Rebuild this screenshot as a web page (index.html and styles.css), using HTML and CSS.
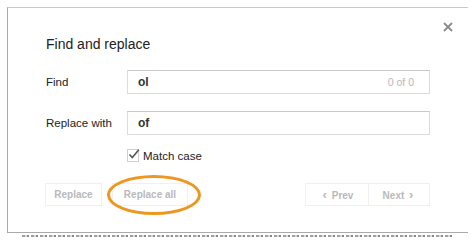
FILE: index.html
```html
<!DOCTYPE html>
<html lang="en">
<head>
  <meta charset="UTF-8">
  <title>Find and replace</title>
  <link rel="stylesheet" href="styles.css">
</head>
<body>
  <div class="dialog">
    <button class="close" aria-label="Close">
      <svg width="10" height="10" viewBox="0 0 10 10"><path d="M1 1L9 9M9 1L1 9" stroke="#8a8a8a" stroke-width="1.8" fill="none"/></svg>
    </button>
    <h1>Find and replace</h1>
    <div class="row">
      <label for="find">Find</label>
      <div class="field">
        <input type="text" id="find" value="ol">
        <span class="count">0 of 0</span>
      </div>
    </div>
    <div class="row">
      <label for="replaceWith">Replace with</label>
      <div class="field">
        <input type="text" id="replaceWith" value="of">
      </div>
    </div>
    <div class="check-row">
      <span class="checkbox">
        <svg width="13" height="13" viewBox="0 0 13 13"><path d="M2.5 6.5L5.3 9.6L11.8 1.8" stroke="#555" stroke-width="1.6" fill="none"/></svg>
      </span>
      <span>Match case</span>
    </div>
    <div class="actions">
      <div class="left-group">
        <button class="btn btn-replace">Replace</button>
        <div class="highlight-wrap">
          <button class="btn btn-all">Replace all</button>
          <span class="ring"></span>
        </div>
      </div>
      <div class="nav-group">
        <button class="btn btn-prev"><span class="chev">&lsaquo;</span> Prev</button>
        <button class="btn btn-next">Next <span class="chev">&rsaquo;</span></button>
      </div>
    </div>
  </div>
  <div class="doc-line"></div>
</body>
</html>
```
FILE: styles.css
```css
body {
  margin: 0;
  background-color: #fff;
  font-family: "Liberation Sans", Arial, sans-serif;
  color: #222;
  width: 474px;
  height: 241px;
  overflow: hidden;
}

.dialog {
  position: relative;
  box-sizing: border-box;
  margin: 7px 0 0 7px;
  width: 461px;
  height: 226px;
  border-top: 1px solid #c9c9c9;
  border-left: 1px solid #a9a9a9;
  border-bottom: 1px solid #a9a9a9;
  padding: 28px 0 0 38px;
}

.close {
  position: absolute;
  top: 14px;
  right: 15px;
  background: none;
  border: none;
  padding: 0;
  line-height: 0;
}

h1 {
  margin: 0 0 17px;
  font-size: 14px;
  font-weight: normal;
  line-height: 17px;
  color: #222;
}

.row {
  display: flex;
  align-items: center;
  margin-bottom: 17px;
}

.row label {
  width: 81px;
  font-size: 11.5px;
}

.field {
  position: relative;
  width: 303px;
}

.field input {
  box-sizing: border-box;
  width: 100%;
  height: 24px;
  border: 1px solid #dcdcdc;
  border-top-color: #c8c8c8;
  padding: 0 10px;
  font-family: inherit;
  font-size: 12px;
  font-weight: bold;
  color: #333;
  outline: none;
}

.count {
  position: absolute;
  right: 16px;
  top: 6px;
  font-size: 10.5px;
  color: #b8b8b8;
}

.check-row {
  display: flex;
  align-items: center;
  gap: 4px;
  margin: -3px 0 0 81px;
  font-size: 11.5px;
}

.checkbox {
  box-sizing: border-box;
  width: 12px;
  height: 13px;
  border: 1px solid #d0d0d0;
  line-height: 0;
}

.checkbox svg {
  margin: -2px 0 0 -1px;
}

.actions {
  display: flex;
  justify-content: space-between;
  width: 385px;
  margin: 21px 0 0 -1px;
}

.left-group {
  display: flex;
  gap: 10px;
}

.btn {
  box-sizing: border-box;
  height: 23px;
  background: #fff;
  border: 1px solid #f0f0f0;
  font-family: inherit;
  font-size: 10px;
  font-weight: bold;
  color: #b9b9b9;
  padding: 0;
}

.btn-replace {
  width: 57px;
}

.btn-all {
  width: 76px;
}

.highlight-wrap {
  position: relative;
}

.ring {
  position: absolute;
  left: -5px;
  top: -8px;
  width: 94px;
  height: 40px;
  box-sizing: border-box;
  border: 3px solid #ee9720;
  border-radius: 50%;
}

.nav-group {
  display: flex;
}

.btn-prev {
  width: 64px;
}

.btn-next {
  width: 61px;
  border-left: none;
}

.chev {
  font-size: 13px;
  font-weight: bold;
  margin: 0 2px;
}

.doc-line {
  margin: 2px 0 0 22px;
  width: 430px;
  height: 2px;
  background: repeating-linear-gradient(90deg, #777 0 3px, #ccc 3px 5px, #555 5px 7px, transparent 7px 9px);
  opacity: 0.7;
}
```
